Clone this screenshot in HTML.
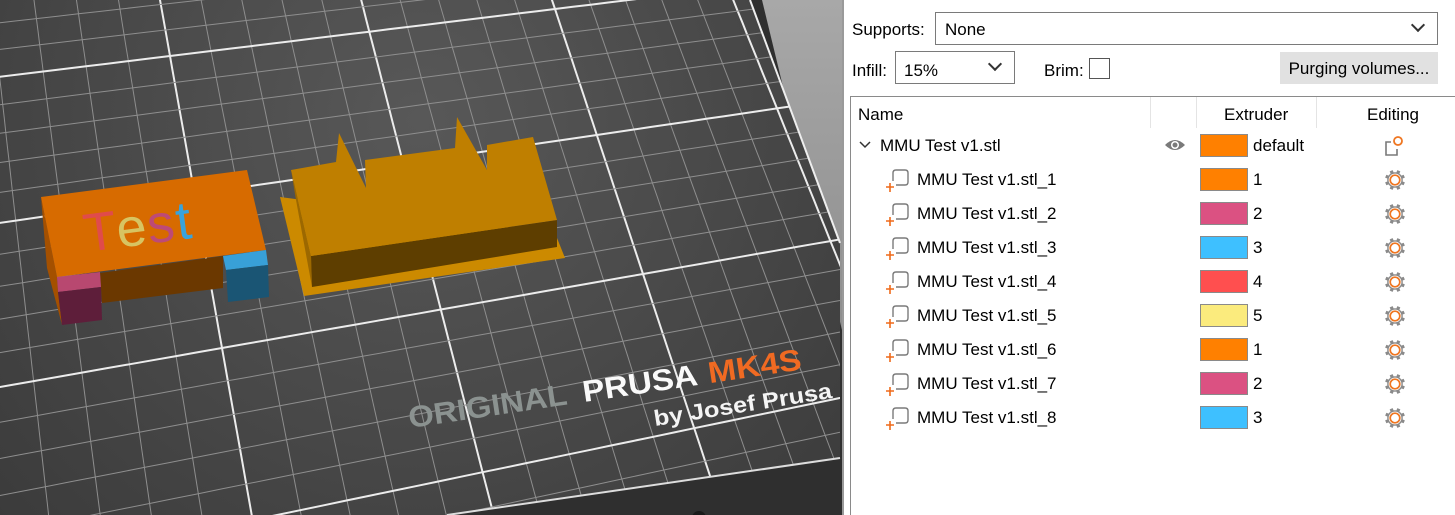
<!DOCTYPE html>
<html><head><meta charset="utf-8">
<style>
*{margin:0;padding:0;box-sizing:border-box}
html,body{width:1455px;height:515px;overflow:hidden}
body{background:#fff;font-family:"Liberation Sans",sans-serif;position:relative}
#view{position:absolute;left:0;top:0;width:842px;height:515px;overflow:hidden}
#panel{position:absolute;left:842px;top:0;width:613px;height:515px;overflow:hidden;background:#fff;border-left:2px solid #9a9a9a;font-size:17px;color:#000}
.a{position:absolute;white-space:nowrap}
.box{position:absolute;border:1px solid #7a7a7a;background:#fff}
.chev{position:absolute;width:10px;height:10px;border-right:2px solid #333;border-bottom:2px solid #333;transform:rotate(45deg)}
.sw{position:absolute;left:356px;width:48px;height:23px;border:1px solid #8a8a8a}
.row{position:absolute;left:0;width:613px;height:34px}
</style></head><body>
<div id="view">
<svg width="842" height="515" viewBox="0 0 842 515">
<defs>
<radialGradient id="bg" cx="420" cy="120" r="600" gradientUnits="userSpaceOnUse">
<stop offset="0" stop-color="#585858"/><stop offset="1" stop-color="#3a3a3a"/></radialGradient>
<linearGradient id="gr" x1="0" y1="0" x2="0" y2="1"><stop offset="0" stop-color="#a8a8a8"/><stop offset="1" stop-color="#8e8e8e"/></linearGradient>
<clipPath id="bed"><polygon points="0,0 750,0 840,243 840,458 447,515 0,515"/></clipPath>
</defs>
<rect width="842" height="515" fill="#2f2f2f"/>
<polygon points="762,0 842,0 842,330" fill="url(#gr)"/>
<polygon points="0,0 750,0 840,243 840,458 447,515 0,515" fill="url(#bg)"/>
<g id="grid" clip-path="url(#bed)"></g>
<polyline points="750,0 840,243" stroke="#eee" stroke-width="2" fill="none"/>
<polyline points="447,515 840,458" stroke="#ddd" stroke-width="2" fill="none"/>
<circle cx="699" cy="518" r="7" fill="#1a1a1a"/>
<g transform="translate(410,428) rotate(-8.5)" font-family="Liberation Sans" font-weight="bold" font-size="30">
<text x="0" y="0" fill="#8b9290" textLength="160" lengthAdjust="spacingAndGlyphs">ORIGINAL</text>
<text x="176" y="0" fill="#fafafa" textLength="116" lengthAdjust="spacingAndGlyphs">PRUSA</text>
<text x="303" y="0" fill="#f06a22" textLength="94" lengthAdjust="spacingAndGlyphs">MK4S</text>
</g>
<text transform="translate(655,426) rotate(-9)" font-family="Liberation Sans" font-weight="bold" font-size="22" fill="#f4f4f4" textLength="180" lengthAdjust="spacingAndGlyphs">by Josef Prusa</text>
<polygon points="41,197 57,277 58,292 62,325 47,268" fill="#a45000"/>
<polygon points="100,273 223,256 223,288 102,303" fill="#6b3800"/>
<polygon points="41,197 247,170 266,250 57,277" fill="#d76b00"/>
<polygon points="57,277 100,272 101,287 58,292" fill="#b84870"/>
<polygon points="58,292 101,287 102,320 62,325" fill="#5e1e3a"/>
<polygon points="223,256 266,250 268,265 226,270" fill="#38a0d8"/>
<polygon points="226,270 268,265 269,297 228,302" fill="#1a5574"/>
<g transform="translate(86,252) rotate(-7.5)" font-family="Liberation Sans" font-size="54">
<text x="0" y="0" fill="#e04b4b">T</text><text x="33" y="0" fill="#d7c462">e</text><text x="64" y="0" fill="#bd4a76">s</text><text x="93" y="0" fill="#38a3dc">t</text></g>
<polygon points="280,197 304,296 565,258 555,233" fill="#cc8a00"/>
<polygon points="291,170 311,256 312,287 296,200" fill="#9c6800"/>
<polygon points="311,256 557,220 557,247 312,287" fill="#5e3e00"/>
<polygon points="291,170 336,162 339,133 366,188 365,160 455,148 457,117 487,170 487,145 533,137 557,220 311,256" fill="#bf7f00"/>
</svg>
</div>
<div id="panel">
<div class="a" style="left:8px;top:20px">Supports:</div>
<div class="box" style="left:91px;top:12px;width:503px;height:33px"></div>
<div class="a" style="left:101px;top:20px">None</div>
<div class="chev" style="left:569px;top:20px"></div>
<div class="a" style="left:8px;top:61px">Infill:</div>
<div class="box" style="left:51px;top:51px;width:120px;height:33px"></div>
<div class="a" style="left:60px;top:61px">15%</div>
<div class="chev" style="left:146px;top:59px"></div>
<div class="a" style="left:200px;top:61px">Brim:</div>
<div class="box" style="left:245px;top:58px;width:21px;height:21px;border-color:#555"></div>
<div class="a" style="left:436px;top:52px;width:158px;height:32px;background:#e1e1e1;text-align:center;line-height:34px">Purging volumes...</div>
<div class="a" style="left:6px;top:96px;width:607px;height:419px;border-top:1px solid #8a8a8a;border-left:1px solid #8a8a8a"></div>
<div class="a" style="left:306px;top:97px;width:1px;height:31px;background:#e4e4e4"></div>
<div class="a" style="left:352px;top:97px;width:1px;height:31px;background:#e4e4e4"></div>
<div class="a" style="left:472px;top:97px;width:1px;height:31px;background:#e4e4e4"></div>
<div class="a" style="left:14px;top:105px">Name</div>
<div class="a" style="left:380px;top:105px">Extruder</div>
<div class="a" style="left:523px;top:105px">Editing</div>
<div id="rows"></div>
</div>
<script>
(function(){
var P=[[170,56],[555,9],[643,274],[222,348]];
var x0=P[0][0],y0=P[0][1],x1=P[1][0],y1=P[1][1],x2=P[2][0],y2=P[2][1],x3=P[3][0],y3=P[3][1];
var dx1=x1-x2,dx2=x3-x2,dx3=x0-x1+x2-x3,dy1=y1-y2,dy2=y3-y2,dy3=y0-y1+y2-y3;
var den=dx1*dy2-dx2*dy1;
var g=(dx3*dy2-dx2*dy3)/den,h=(dx1*dy3-dx3*dy1)/den;
var a=x1-x0+g*x1,b=x3-x0+h*x3,c=x0,d=y1-y0+g*y1,e=y3-y0+h*y3,f=y0;
function m(u,v){var s=u/2,t=v/2;var w=g*s+h*t+1;if(w<0.08)return null;return [(a*s+b*t+c)/w,(d*s+e*t+f)/w];}
var out='';
function line(fn,maj){var pts=[];for(var k=-60;k<=100;k++){var p=fn(k/10);if(p&&Math.abs(p[0])<3000&&Math.abs(p[1])<3000)pts.push(p[0].toFixed(1)+','+p[1].toFixed(1));}
out+='<polyline fill="none" points="'+pts.join(' ')+'" stroke="'+(maj?'#ececec':'#8e8e8e')+'" stroke-width="'+(maj?2:1)+'"/>';}
for(var i=-40;i<=60;i++){var u=i/5,maj=(i%5===0);line(function(t){return m(u,t);},maj);}
for(var j=-40;j<=60;j++){var v=j/5,mj=(j%5===0);line(function(t){return m(t,v);},mj);}
document.getElementById('grid').innerHTML=out;
var rows=[['default','#ff8000'],['1','#ff8000'],['2','#db5182'],['3','#3ec0ff'],['4','#ff4f4f'],['5','#fbeb7d'],['1','#ff8000'],['2','#db5182'],['3','#3ec0ff']];
var html='';
rows.forEach(function(r,i){var top=128+i*34;
html+='<div class="row" style="top:'+top+'px">';
if(i===0){
html+='<svg class="a" style="left:14px;top:11px" width="14" height="12"><polyline points="2,3 7,8 12,3" fill="none" stroke="#333" stroke-width="1.5"/></svg>';
html+='<div class="a" style="left:36px;top:8px">MMU Test v1.stl</div>';
html+='<svg class="a" style="left:320px;top:9px" width="22" height="16"><path d="M1,8 Q11,-2 21,8 Q11,18 1,8Z" fill="#7a7a7a"/><circle cx="11" cy="8" r="4" fill="#fff"/><circle cx="11" cy="8" r="2.5" fill="#7a7a7a"/></svg>';
html+='<svg class="a" style="left:538px;top:6px" width="24" height="24"><path d="M9,8 H4 V21 H15 V15" fill="none" stroke="#7a7a7a" stroke-width="1.6"/><circle cx="16" cy="7" r="4" fill="none" stroke="#ef7621" stroke-width="1.8"/></svg>';
}else{
html+='<svg class="a" style="left:40px;top:5px" width="26" height="28"><path d="M9,14 V6 Q9,3 12,3 H21 Q24,3 24,6 V15 Q24,18 21,18 H12" fill="none" stroke="#7a7a7a" stroke-width="1.4"/><path d="M2,20 H10 M6,16 V25" stroke="#ef6a1a" stroke-width="1.6"/></svg>';
html+='<div class="a" style="left:73px;top:8px">MMU Test v1.stl_'+i+'</div>';
html+='<svg class="a" style="left:539px;top:6px" width="24" height="24"><g fill="#8a8a8a" transform="translate(12,12)">';
for(var k=0;k<8;k++)html+='<rect x="-1.6" y="-10" width="3.2" height="4" transform="rotate('+(k*45+22.5)+')"/>';
html+='<circle r="7.8"/></g><circle cx="12" cy="12" r="6.4" fill="#fff"/><circle cx="12" cy="12" r="4.8" fill="none" stroke="#ef7621" stroke-width="1.7"/></svg>';
}
html+='<div class="sw" style="top:6px;background:'+r[1]+'"></div>';
html+='<div class="a" style="left:409px;top:8px">'+r[0]+'</div></div>';
});
document.getElementById('rows').innerHTML=html;
})();
</script>
</body></html>
